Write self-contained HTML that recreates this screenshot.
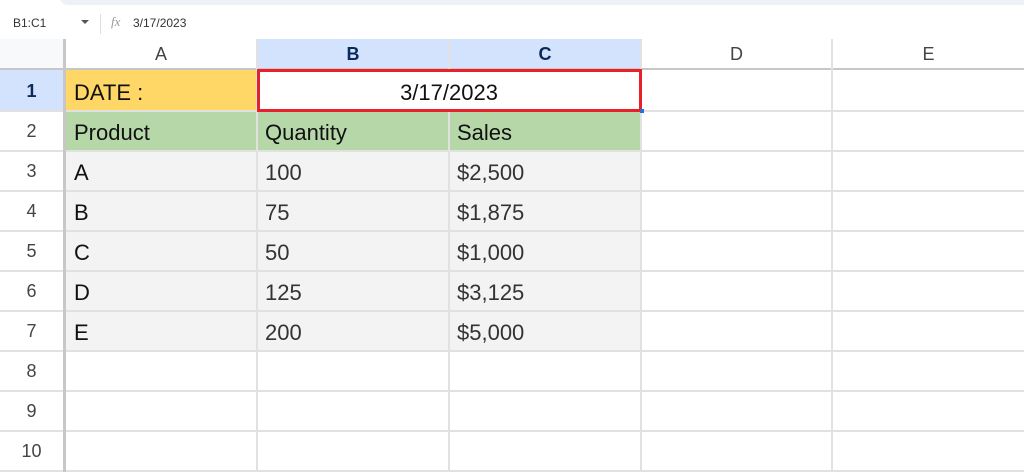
<!DOCTYPE html><html><head><style>
body{margin:0;width:1024px;height:472px;overflow:hidden;background:#fff;font-family:"Liberation Sans",Arial,sans-serif;position:relative}
div{position:absolute;box-sizing:border-box}
.c{font-size:22px;color:#111;padding-left:8px;display:flex;align-items:center}
.h{font-size:18px;color:#444;display:flex;align-items:center;justify-content:center}
.vl{width:2px;background:#e1e1e1;top:39px;height:433px}
.hl{height:2px;background:#e1e1e1;left:0;width:1024px}
</style></head><body>
<div style="left:60px;top:-10px;width:980px;height:15px;background:#edf1f8;border-radius:10px"></div>
<div style="left:13px;top:16px;font-size:12px;color:#333">B1:C1</div>
<div style="left:81px;top:20px;width:0;height:0;border-left:4px solid transparent;border-right:4px solid transparent;border-top:4px solid #555"></div>
<div style="left:100px;top:14px;width:1px;height:20px;background:#ddd"></div>
<div style="left:111px;top:14px;font-size:13px;color:#999;font-style:italic;font-family:'Liberation Serif',serif">fx</div>
<div style="left:133px;top:16px;font-size:12px;color:#333">3/17/2023</div>
<div style="left:0;top:39px;width:64px;height:31px;background:#f8f9fa"></div>
<div style="left:257px;top:39px;width:384px;height:31px;background:#d3e3fd"></div>
<div style="left:0;top:70px;width:64px;height:40px;background:#d3e3fd"></div>
<div style="left:66px;top:70px;width:191px;height:41px;background:#fed766"></div>
<div style="left:66px;top:111px;width:575px;height:40px;background:#b6d7a8"></div>
<div style="left:66px;top:151px;width:575px;height:201px;background:#f3f3f3"></div>
<div class="hl" style="top:68px;background:#c7c7c7"></div>
<div class="hl" style="top:110px"></div><div class="hl" style="top:150px"></div><div class="hl" style="top:190px"></div><div class="hl" style="top:230px"></div><div class="hl" style="top:270px"></div><div class="hl" style="top:310px"></div><div class="hl" style="top:350px"></div><div class="hl" style="top:390px"></div><div class="hl" style="top:430px"></div><div class="hl" style="top:470px"></div>
<div class="vl" style="left:63px;width:3px;background:#c7c7c7"></div>
<div class="vl" style="left:256px"></div><div class="vl" style="left:448px"></div><div class="vl" style="left:640px"></div><div class="vl" style="left:831px"></div>
<div class="h" style="left:66px;top:39px;width:190px;height:30px">A</div>
<div class="h" style="left:258px;top:39px;width:190px;height:30px;color:#0b2a5c;font-weight:bold">B</div>
<div class="h" style="left:450px;top:39px;width:190px;height:30px;color:#0b2a5c;font-weight:bold">C</div>
<div class="h" style="left:642px;top:39px;width:189px;height:30px">D</div>
<div class="h" style="left:833px;top:39px;width:191px;height:30px">E</div>
<div class="h" style="left:0;top:71px;width:63px;height:40px;color:#0b2a5c;font-weight:bold">1</div>
<div class="h" style="left:0;top:111px;width:63px;height:40px">2</div>
<div class="h" style="left:0;top:151px;width:63px;height:40px">3</div>
<div class="h" style="left:0;top:191px;width:63px;height:40px">4</div>
<div class="h" style="left:0;top:231px;width:63px;height:40px">5</div>
<div class="h" style="left:0;top:271px;width:63px;height:40px">6</div>
<div class="h" style="left:0;top:311px;width:63px;height:40px">7</div>
<div class="h" style="left:0;top:351px;width:63px;height:40px">8</div>
<div class="h" style="left:0;top:391px;width:63px;height:40px">9</div>
<div class="h" style="left:0;top:431px;width:63px;height:40px">10</div>
<div style="left:257px;top:69px;width:385px;height:43px;border:3px solid #e8202a;background:#fff"></div>
<div style="left:640px;top:109px;width:4px;height:4px;background:#1a73e8"></div>
<div class="c" style="left:257px;top:73px;width:384px;height:40px;justify-content:center;padding:0">3/17/2023</div>
<div class="c" style="left:66px;top:73px;height:40px">DATE :</div>
<div class="c" style="left:66px;top:113px;height:40px">Product</div>
<div class="c" style="left:257px;top:113px;height:40px">Quantity</div>
<div class="c" style="left:449px;top:113px;height:40px">Sales</div>
<div class="c" style="left:66px;top:153px;height:40px">A</div><div class="c" style="left:257px;top:153px;height:40px;color:#333">100</div><div class="c" style="left:449px;top:153px;height:40px;color:#333">$2,500</div>
<div class="c" style="left:66px;top:193px;height:40px">B</div><div class="c" style="left:257px;top:193px;height:40px;color:#333">75</div><div class="c" style="left:449px;top:193px;height:40px;color:#333">$1,875</div>
<div class="c" style="left:66px;top:233px;height:40px">C</div><div class="c" style="left:257px;top:233px;height:40px;color:#333">50</div><div class="c" style="left:449px;top:233px;height:40px;color:#333">$1,000</div>
<div class="c" style="left:66px;top:273px;height:40px">D</div><div class="c" style="left:257px;top:273px;height:40px;color:#333">125</div><div class="c" style="left:449px;top:273px;height:40px;color:#333">$3,125</div>
<div class="c" style="left:66px;top:313px;height:40px">E</div><div class="c" style="left:257px;top:313px;height:40px;color:#333">200</div><div class="c" style="left:449px;top:313px;height:40px;color:#333">$5,000</div>
</body></html>
